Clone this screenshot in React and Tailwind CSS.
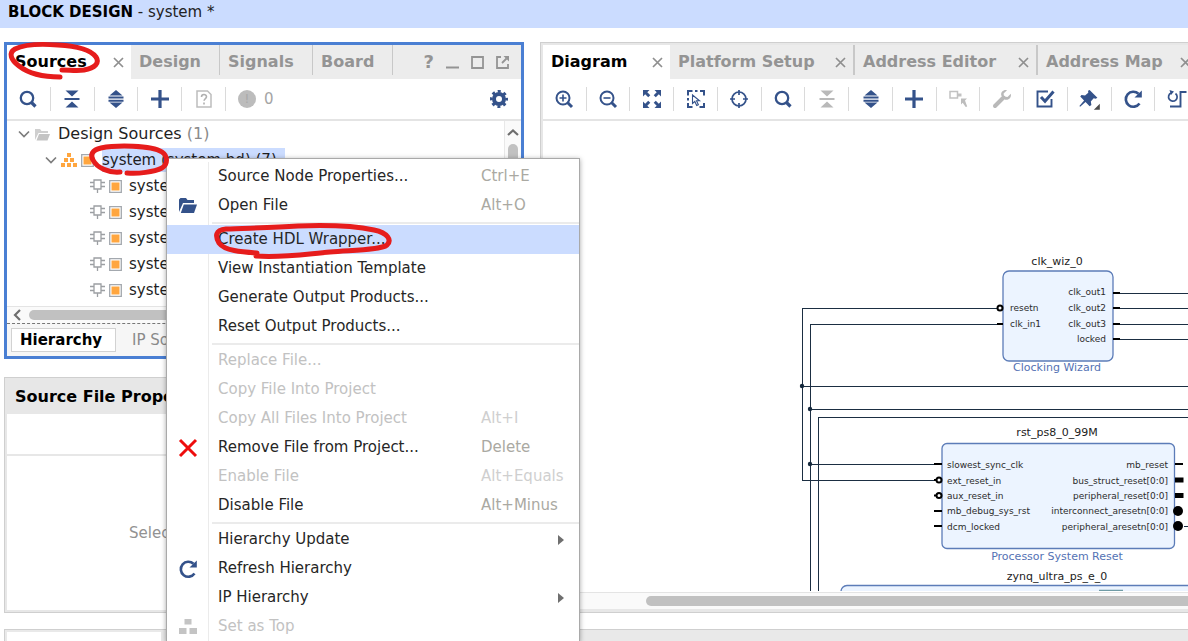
import clsx from 'clsx'

const NAVY = '#34528a'
const GREY = '#b9b9b9'

/* ---------- icons ---------- */

function Icon({ size = 20, children, className }) {
  return (
    <svg width={size} height={size} viewBox="0 0 20 20" fill="none" className={clsx('shrink-0', className)} aria-hidden="true">
      {children}
    </svg>
  )
}

const Search = () => (
  <Icon>
    <circle cx="9" cy="9" r="6.2" stroke={NAVY} strokeWidth="2.3" />
    <path d="M13.5 13.5 17.5 17.5" stroke={NAVY} strokeWidth="3.2" />
  </Icon>
)

const Zoom = ({ plus }) => (
  <Icon>
    <circle cx="9" cy="9" r="6.5" stroke={NAVY} strokeWidth="2" />
    <path d="M13.5 13.5 18 18" stroke={NAVY} strokeWidth="3" />
    <path d={plus ? 'M5.5 9h7M9 5.5v7' : 'M5.5 9h7'} stroke={NAVY} strokeWidth="1.6" />
  </Icon>
)

const Collapse = ({ color = NAVY }) => (
  <Icon>
    <path d="M3.5 1.5h13L10 7.5zM3.5 18.5h13L10 12.5z" fill={color} />
    <path d="M2.5 10h15" stroke={color} strokeWidth="2" />
  </Icon>
)

const Expand = () => (
  <Icon>
    <path d="M10 1 16.5 6.500h-13zM10 19l6.500-5.500h-13z" fill={NAVY} />
    <path d="M2.500 8.500h15M2.500 11.700h15" stroke={NAVY} strokeWidth="2" />
  </Icon>
)

const Plus = () => (
  <Icon>
    <path d="M1 10h18M10 1v18" stroke={NAVY} strokeWidth="3.200" />
  </Icon>
)

const HelpDoc = () => (
  <Icon>
    <path d="M3 2h10.500L17 5.500V18H3z" stroke="#bdbdbd" strokeWidth="1.500" />
    <path d="M7.500 8c0-3.300 5-3.200 5-.3 0 1.900-2.400 1.800-2.400 4.100M10 13.500v2" stroke="#b0b0b0" strokeWidth="1.600" />
  </Icon>
)

const Gear = () => (
  <Icon>
    <circle cx="10" cy="10" r="5" stroke={NAVY} strokeWidth="4" />
    <circle cx="10" cy="10" r="7.700" stroke={NAVY} strokeWidth="2.600" strokeDasharray="3.020 3.028" strokeDashoffset="1.500" />
  </Icon>
)

const Fit = () => (
  <Icon>
    <path d="M1 1h6.500L5.300 3.200 8.300 6.200 6.200 8.300 3.200 5.300 1 7.500zM19 1v6.500L16.800 5.300 13.800 8.300 11.700 6.200 14.700 3.200 12.500 1zM1 19v-6.500L3.200 14.700 6.200 11.700 8.300 13.800 5.300 16.800 7.500 19zM19 19h-6.500L14.700 16.800 11.700 13.800 13.800 11.700 16.800 14.700 19 12.500z" fill={NAVY} />
  </Icon>
)

const FitSelection = () => (
  <Icon>
    <path d="M2 6.500V2h4.500M9 2h2.500M14 2h4v4.500M2 9v2.500M2 14v4h4.500M18 14v4h-4.500" stroke={NAVY} strokeWidth="2" />
    <path d="M6.500 6v8.500l2.300-2 1.900 4 1.700-.8-1.900-4h3z" stroke={NAVY} strokeWidth="1.100" />
  </Icon>
)

const Target = () => (
  <Icon>
    <circle cx="10" cy="10" r="7" stroke={NAVY} strokeWidth="1.700" />
    <path d="M10 1v5M10 14v5M1 10h5M14 10h5" stroke={NAVY} strokeWidth="1.700" />
  </Icon>
)

const Hierarchical = () => (
  <Icon>
    <path d="M2 2.500h7.500V9H2z" stroke="#c2c2c2" strokeWidth="1.500" />
    <path d="M10 6h3.500" stroke="#c2c2c2" strokeWidth="3" />
    <path d="M13 9.500h6l-2 2 2.200 6-1.500.500-3-4.200L13 15.500z" fill="#bdbdbd" />
  </Icon>
)

const Wrench = () => (
  <Icon>
    <path d="M3 17 11.500 8.500" stroke={GREY} strokeWidth="4" strokeLinecap="round" />
    <path d="M18.800 4.800 15.500 8 12 7.600 11.600 4.500 15 1.200C11.500.500 8.500 3 9.300 6.600L13 10.700C17 11.500 19.700 8.500 18.800 4.800z" fill={GREY} />
  </Icon>
)

const Validate = () => (
  <Icon>
    <path d="M13 2.500H2.500v15h14V10" stroke={NAVY} strokeWidth="1.900" />
    <path d="M6 8l4 4.200L18.500 2.500" stroke={NAVY} strokeWidth="3" />
  </Icon>
)

const Pin = () => (
  <Icon size={24}>
    <path d="M10.500 2.500 17 9l-1.400.7-1.700-.3-2.400 2.700.5 3-1.500.9-3.400-3.500-4.500 4-.6-.6 3.900-4.600L2.700 8l1-1.400 3 .5 2.700-2.400-.2-1.500z" fill={NAVY} />
    <path d="M19 14v5h-5z" fill="#4c4c4c" />
  </Icon>
)

const Refresh = () => (
  <Icon>
    <path d="M16.500 14.500A7.500 7.500 0 1 1 15.500 4.800" stroke={NAVY} strokeWidth="2.600" />
    <path d="M18.800 1.500v7H11.500z" fill={NAVY} />
  </Icon>
)

const Reroute = () => (
  <Icon>
    <path d="M8.500 4.500A4.300 4.300 0 1 1 4 4" stroke={NAVY} strokeWidth="1.700" />
    <path d="M2.500 1 7 2.500 4 6z" fill={NAVY} />
    <path d="M19.500 3h-6v14.500H3" stroke={NAVY} strokeWidth="1.900" />
  </Icon>
)

const OpenFolder = () => (
  <Icon>
    <path d="M1 16V3.500L2.500 2H8l1.500 2h6.500v3H5z" fill={NAVY} />
    <path d="M5.800 8.500H19L16 17H2.800z" fill={NAVY} />
  </Icon>
)

const RemoveX = () => (
  <Icon>
    <path d="M2 2l16 16M18 2 2 18" stroke="#ee0d0d" strokeWidth="3" />
  </Icon>
)

const Blocks = () => (
  <Icon>
    <path d="M6.500 2h7v5.500h-7zM1 11h7.500v6H1zM11.500 11H19v6h-7.500z" fill="#c4c4c4" />
  </Icon>
)

const Chevron = () => (
  <svg width="12" height="8" viewBox="0 0 12 8" fill="none" className="shrink-0" aria-hidden="true">
    <path d="M1 1.500l5 5 5-5" stroke="#7d7d7d" strokeWidth="1.700" />
  </svg>
)

const GreyFolder = () => (
  <svg width="15" height="13" viewBox="0 0 15 13" className="shrink-0" aria-hidden="true">
    <path d="M0 12V1h5l1.500 2H13v2H3.500z" fill="#cfcfcf" />
    <path d="M4 6h11l-2.500 6.500H1.500z" fill="#c4c4c4" />
  </svg>
)

const Pyramid = () => (
  <svg width="16" height="14" viewBox="0 0 16 14" fill="#ffa63f" className="shrink-0" aria-hidden="true">
    <path d="M6 0h4v4H6zM3 5h4v4H3zM9 5h4v4H9zM0 10h4v4H0zM6 10h4v4H6zM12 10h4v4h-4z" />
  </svg>
)

const Cell = () => (
  <svg width="13" height="13" viewBox="0 0 13 13" className="shrink-0" aria-hidden="true">
    <path d="M.700.700h11.600v11.600H.700z" fill="#fff" stroke="#a3a8ae" strokeWidth="1.300" />
    <path d="M2.500 2.500h8v8h-8z" fill="#ffa63f" />
  </svg>
)

const Chip = () => (
  <svg width="15" height="14" viewBox="0 0 15 14" fill="none" stroke="#9c9fa3" strokeWidth="1.300" className="shrink-0" aria-hidden="true">
    <path d="M4 1h7v9H4zM0 3.500h4M0 7.500h4M11 3.500h4M11 7.500h4M7.500 10v4" />
  </svg>
)

const Close = () => (
  <svg width="11" height="11" viewBox="0 0 11 11" fill="none" className="shrink-0" aria-hidden="true">
    <path d="M1 1l9 9M10 1l-9 9" stroke="#8f8f8f" strokeWidth="1.700" />
  </svg>
)

/* ---------- shared pieces ---------- */

function Tab({ label, active, closable, className }) {
  return (
    <button
      role="tab"
      aria-selected={!!active}
      className={clsx(
        'flex h-full shrink-0 items-center justify-between pl-2 text-base font-bold whitespace-nowrap',
        active ? 'bg-white text-black' : 'text-[#949494]',
        className,
      )}
    >
      {label}
      {closable && <Close />}
    </button>
  )
}

function TabDivider({ thick }) {
  return <div className={clsx('mb-1 h-[30px] shrink-0 self-start bg-[#c8c8c8]', thick ? 'w-0.5' : 'w-px')} />
}

function Tool({ label, icon, last }) {
  return (
    <div className="flex flex-1 items-center">
      <button aria-label={label} className="flex flex-1 justify-center">{icon}</button>
      {!last && <div className="h-6 w-px bg-[#dadada]" />}
    </div>
  )
}

/* ---------- sources ---------- */

const SOURCE_TOOLS = [
  ['Search', <Search />],
  ['Collapse all', <Collapse />],
  ['Expand all', <Expand />],
  ['Add sources', <Plus />],
  ['Show help', <HelpDoc />],
]

const CHILDREN = ['system_1', 'system_2', 'system_3', 'system_4', 'system_5']

function SourcesPanel() {
  return (
    <section className="border-3 border-[#4a7fd3] bg-white">
      <div className="flex h-[34px] bg-[#ececec]" role="tablist">
        <Tab label="Sources" active closable className="w-[124px] pr-[7px]" />
        <Tab label="Design" className="w-[88px]" />
        <TabDivider />
        <Tab label="Signals" className="w-[92px]" />
        <TabDivider />
        <Tab label="Board" className="w-[79px]" />
        <TabDivider />
        <div className="ml-auto flex items-center gap-3 pr-3 text-[#949494]">
          <button aria-label="Help" className="text-lg font-bold">?</button>
          <button aria-label="Minimize">
            <svg width="13" height="13" viewBox="0 0 13 13"><path d="M0 11.500h13" stroke="currentColor" strokeWidth="2" /></svg>
          </button>
          <button aria-label="Maximize">
            <svg width="13" height="13" viewBox="0 0 13 13" fill="none"><path d="M1 1h11v11H1z" stroke="currentColor" strokeWidth="1.800" /></svg>
          </button>
          <button aria-label="Float">
            <svg width="13" height="13" viewBox="0 0 13 13" fill="none">
              <path d="M5 1H1v11h11V8M6 7l4.500-4.500" stroke="currentColor" strokeWidth="1.800" />
              <path d="M7.500 0H13v5.500z" fill="currentColor" />
            </svg>
          </button>
        </div>
      </div>

      <div className="flex h-[42px] items-center border-b-2 border-[#e4e4e4]">
        <div className="flex w-[219px] shrink-0">
          {SOURCE_TOOLS.map(([label, icon]) => <Tool key={label} label={label} icon={icon} />)}
        </div>
        <div className="flex items-center gap-2 pl-3 text-[15px] text-[#a5a5a5]">
          <span className="flex size-[18px] items-center justify-center rounded-full bg-[#bcbcbc] text-xs text-[#a8a8a8]">!</span>
          0
        </div>
        <button aria-label="Settings" className="mr-3 ml-auto"><Gear /></button>
      </div>

      <div className="flex">
        <ul className="h-[185px] flex-1 text-[15px] whitespace-nowrap text-[#1f1f1f]">
          <li className="flex h-[26px] items-center pl-[11px]">
            <Chevron />
            <span className="pr-2 pl-[5px]"><GreyFolder /></span>
            <span className="text-base">Design Sources <span className="text-[#8a8a8a]">(1)</span></span>
          </li>
          <li className="flex h-[26px] items-center gap-1 pl-[38px]">
            <Chevron />
            <Pyramid />
            <Cell />
            <span className="ml-1 bg-[#cbdcff] pr-2 leading-6">system (system.bd) (7)</span>
          </li>
          {CHILDREN.map((name) => (
            <li key={name} className="flex h-[26px] items-center gap-1 pl-[83px]">
              <Chip />
              <Cell />
              <span className="pl-[3px]">{name}</span>
            </li>
          ))}
        </ul>
        <div className="flex w-[17px] flex-col items-center border-l border-[#e8e8e8] bg-[#fafafa] pt-2">
          <svg width="12" height="7" viewBox="0 0 12 7" fill="none"><path d="M1 6l5-4.500L11 6" stroke="#6e6e6e" strokeWidth="2.200" /></svg>
          <div className="mt-2 h-28 w-2.5 rounded-full bg-[#c1c1c1]" />
        </div>
      </div>

      <div className="flex h-[17px] items-center gap-2 border-t border-[#e4e4e4] bg-[#fafafa] pl-1.5">
        <svg width="8" height="12" viewBox="0 0 8 12" fill="none"><path d="M7 1 2 6l5 5" stroke="#6e6e6e" strokeWidth="2.200" /></svg>
        <div className="h-2.5 w-96 rounded-full bg-[#c1c1c1]" />
      </div>

      <div className="flex h-[33px] items-center gap-4 border-t border-dashed border-[#777] bg-[#f6f6f6] pl-1 text-[15px]">
        <button className="w-[105px] border border-[#d2d2d2] bg-white pl-2 text-left leading-[22px] font-bold text-black">Hierarchy</button>
        <button className="text-[#8a8a8a]">IP Sources</button>
      </div>
    </section>
  )
}

function PropertiesPanel() {
  return (
    <section className="flex flex-1 flex-col border border-[#cfcfcf] bg-[#e7e7e7] p-0.5">
      <h2 className="flex h-[34px] items-center pl-2 text-base font-bold text-black">Source File Properties</h2>
      <div className="h-10 bg-white" />
      <div className="mt-0.5 flex flex-1 items-center bg-white pl-[122px] text-[15px] text-[#929292]">
        Select item
      </div>
    </section>
  )
}

/* ---------- diagram ---------- */

const DIAGRAM_TOOLS = [
  ['Zoom in', <Zoom plus />],
  ['Zoom out', <Zoom />],
  ['Zoom fit', <Fit />],
  ['Fit selection', <FitSelection />],
  ['Auto-fit', <Target />],
  ['Find', <Search />],
  ['Collapse', <Collapse color={GREY} />],
  ['Expand', <Expand />],
  ['Add IP', <Plus />],
  ['Make external', <Hierarchical />],
  ['Customize block', <Wrench />],
  ['Validate design', <Validate />],
  ['Pin', <Pin />],
  ['Regenerate layout', <Refresh />],
  ['Optimize routing', <Reroute />],
]

const WIRES = [
  'M998 308H802V480H938',
  'M998 324H810V592',
  'M1120 293H1190M1120 308H1190M1120 324H1190M1120 339H1190',
  'M802 386H1190M810 409H1190',
  'M818 592V417H1190',
  'M810 464H938M1184 526H1190',
]

const LEFT_PINS = [
  [1010, 308, 'resetn'],
  [1010, 324, 'clk_in1'],
  [947, 465, 'slowest_sync_clk'],
  [947, 481, 'ext_reset_in'],
  [947, 496, 'aux_reset_in'],
  [947, 511, 'mb_debug_sys_rst'],
  [947, 527, 'dcm_locked'],
]

const RIGHT_PINS = [
  [1106, 292, 'clk_out1'],
  [1106, 308, 'clk_out2'],
  [1106, 324, 'clk_out3'],
  [1106, 339, 'locked'],
  [1168, 465, 'mb_reset'],
  [1168, 481, 'bus_struct_reset[0:0]'],
  [1168, 496, 'peripheral_reset[0:0]'],
  [1168, 511, 'interconnect_aresetn[0:0]'],
  [1168, 527, 'peripheral_aresetn[0:0]'],
]

function Diagram() {
  return (
    <svg width="645" height="470" viewBox="543 121 645 470" className="block shrink-0" role="img" aria-label="Block design">
      <g fill="none" stroke="#1b2e42" strokeWidth="1" shapeRendering="crispEdges">
        {WIRES.map((d) => <path key={d} d={d} />)}
      </g>
      <g fill="#14283c">
        <circle cx="802" cy="386" r="2.200" />
        <circle cx="810" cy="409" r="2.200" />
        <circle cx="810" cy="464" r="2.200" />
      </g>

      <g fill="#ecf4ff" stroke="#5c7cb8" strokeWidth="1.300">
        <rect x="1003" y="271" width="110" height="90" rx="6" />
        <rect x="942" y="443.500" width="232.500" height="105" rx="5" />
        <rect x="841" y="585.500" width="432" height="90" rx="6" />
      </g>
      <path d="M1099 590.500h24" stroke="#6f9ba5" strokeWidth="1.500" />

      {/* pin stubs */}
      <path
        d="M997 324h6M1113 293h7M1113 308h7M1113 324h7M1113 339h7M934 464h8M934 511h8M934 526h8M1175 464h8"
        stroke="#000"
        strokeWidth="2"
      />
      <path d="M1175 480h8.500M1175 495.500h8.500" stroke="#000" strokeWidth="5" />
      <path d="M934 480h3M934 495.500h3" stroke="#000" strokeWidth="2" />
      <g fill="#fff" stroke="#000" strokeWidth="2">
        <circle cx="1000" cy="308" r="2.500" />
        <circle cx="939" cy="480" r="2.500" />
        <circle cx="939" cy="495.500" r="2.500" />
      </g>
      <circle cx="1178" cy="511" r="5" />
      <circle cx="1178" cy="526" r="5" />

      <g fontSize="9" fill="#2b2b2b" dominantBaseline="central">
        {LEFT_PINS.map(([x, y, t]) => <text key={t} x={x} y={y}>{t}</text>)}
        {RIGHT_PINS.map(([x, y, t]) => <text key={t} x={x} y={y} textAnchor="end">{t}</text>)}
      </g>
      <g fontSize="11" textAnchor="middle" fill="#222">
        <text x="1057" y="265">clk_wiz_0</text>
        <text x="1057" y="436">rst_ps8_0_99M</text>
        <text x="1057" y="580">zynq_ultra_ps_e_0</text>
      </g>
      <g fontSize="11" textAnchor="middle" fill="#5472b4">
        <text x="1057" y="371">Clocking Wizard</text>
        <text x="1057" y="560">Processor System Reset</text>
      </g>
    </svg>
  )
}

function DiagramPanel() {
  return (
    <section className="flex min-w-0 flex-1 flex-col overflow-hidden border-t border-l border-[#cfcfcf] bg-[#e7e7e7] pt-0.5 pl-0.5">
      <div className="flex h-[34px] shrink-0 bg-[#ececec]" role="tablist">
        <Tab label="Diagram" active closable className="w-[127px] pr-[7px]" />
        <Tab label="Platform Setup" closable className="w-[183px] pr-[7px]" />
        <TabDivider thick />
        <Tab label="Address Editor" closable className="w-[181px] pr-[7px]" />
        <TabDivider thick />
        <Tab label="Address Map" closable className="w-[160px] pr-[7px]" />
      </div>
      <div className="flex h-[42px] shrink-0 items-center border-b-2 border-[#e4e4e4] bg-white">
        <div className="flex w-[656px] shrink-0">
          {DIAGRAM_TOOLS.map(([label, icon], i) => (
            <Tool key={label} label={label} icon={icon} last={i === DIAGRAM_TOOLS.length - 1} />
          ))}
        </div>
      </div>
      <div className="min-h-0 flex-1 overflow-hidden bg-white">
        <Diagram />
      </div>
      <div className="flex h-[17px] shrink-0 items-center justify-end border-t border-[#e4e4e4] bg-[#fafafa]">
        <div className="h-2.5 w-[84%] rounded-l-full bg-[#c1c1c1]" />
      </div>
      <div className="h-1 shrink-0 border-b border-[#cfcfcf]" />
    </section>
  )
}

/* ---------- context menu ---------- */

const MENU = [
  [
    { label: 'Source Node Properties...', keys: 'Ctrl+E' },
    { label: 'Open File', keys: 'Alt+O', icon: <OpenFolder /> },
  ],
  [
    { label: 'Create HDL Wrapper...', hover: true },
    { label: 'View Instantiation Template' },
    { label: 'Generate Output Products...' },
    { label: 'Reset Output Products...' },
  ],
  [
    { label: 'Replace File...', disabled: true },
    { label: 'Copy File Into Project', disabled: true },
    { label: 'Copy All Files Into Project', keys: 'Alt+I', disabled: true },
    { label: 'Remove File from Project...', keys: 'Delete', icon: <RemoveX /> },
    { label: 'Enable File', keys: 'Alt+Equals', disabled: true },
    { label: 'Disable File', keys: 'Alt+Minus' },
  ],
  [
    { label: 'Hierarchy Update', sub: true },
    { label: 'Refresh Hierarchy', icon: <Refresh /> },
    { label: 'IP Hierarchy', sub: true },
    { label: 'Set as Top', icon: <Blocks />, disabled: true },
  ],
]

function MenuItem({ label, keys, icon, hover, disabled, sub }) {
  return (
    <button
      role="menuitem"
      disabled={disabled}
      className={clsx(
        'flex h-[29px] w-full items-center text-left text-[15px]',
        hover && 'bg-[#cbdcff]',
        disabled ? 'text-[#c2c2c2]' : 'text-[#262626]',
      )}
    >
      <span className={clsx('flex h-full w-[42px] shrink-0 items-center justify-center border-r', hover ? 'border-[#cbdcff]' : 'border-[#ebebeb]')}>
        {icon}
      </span>
      <span className="flex-1 pl-[9px]">{label}</span>
      {keys && <span className={clsx('w-[98px]', disabled ? 'text-[#cfcfcf]' : 'text-[#aaa9a2]')}>{keys}</span>}
      {sub && (
        <svg width="6" height="10" viewBox="0 0 6 10" className="mr-[15px]"><path d="M0 0l6 5-6 5z" fill="#6f6f6f" /></svg>
      )}
    </button>
  )
}

function ContextMenu() {
  return (
    <div role="menu" className="absolute top-[158px] left-[166px] w-[414px] border border-[#a9a9a9] bg-white pt-[3px] shadow-[0_1px_5px_rgba(0,0,0,0.35)]">
      {MENU.map((group, i) => (
        <div key={i}>
          {i > 0 && (
            <div className="flex h-[5px] items-center">
              <div className="h-full w-[42px] border-r border-[#ebebeb]" />
              <div className="ml-[3px] h-0.5 flex-1 bg-[#ebebeb]" />
            </div>
          )}
          {group.map((item) => <MenuItem key={item.label} {...item} />)}
        </div>
      ))}
    </div>
  )
}

// Hand-drawn highlight rings
function Markup() {
  return (
    <svg className="pointer-events-none absolute top-0 left-0" width="600" height="300" viewBox="0 0 600 300" fill="none" stroke="#e61c1c" strokeWidth="5" strokeLinecap="round" strokeLinejoin="round" aria-hidden="true">
      <path d="M60 77C42 77 28 73 19 66 11 60 8 53 15 49 25 44 45 44 58 45 76 46 91 50 96 57 100 63 95 68 84 70 77 71 70 70 62 70" />
      <path d="M127 173C138 174 154 172 162 168 168 164 168 156 162 152 151 145 116 145 101 148 92 150 90 155 93 160 97 168 109 173 120 172" />
      <path d="M257 253C242 252 225 251 219 243 215 236 215 230 226 229 245 228 270 228 298 226 325 225 355 226 374 230 388 233 392 240 387 245 381 250 355 250 330 252 306 254 282 258 256 256" />
    </svg>
  )
}

export default function App() {
  return (
    <div className="relative flex h-screen flex-col overflow-hidden bg-white font-['DejaVu_Sans',sans-serif]">
      <header className="h-7 shrink-0 bg-[#cbdcff] pl-2 text-[15px] leading-6 text-[#222]">
        <b className="text-black">BLOCK DESIGN</b> - system *
      </header>

      <main className="flex min-h-0 flex-1 flex-col gap-4 pt-3.5">
        <div className="flex min-h-0 flex-1 gap-4 pl-1">
          <div className="flex w-[520px] shrink-0 flex-col gap-[18px]">
            <SourcesPanel />
            <PropertiesPanel />
          </div>
          <DiagramPanel />
        </div>
        <div className="ml-1 h-3 shrink-0 border-t border-l border-[#cfcfcf] bg-[#e9e9e9] pt-0.5 pl-0.5">
          <div className="h-full w-[154px] bg-white" />
        </div>
      </main>

      <ContextMenu />
      <Markup />
    </div>
  )
}
